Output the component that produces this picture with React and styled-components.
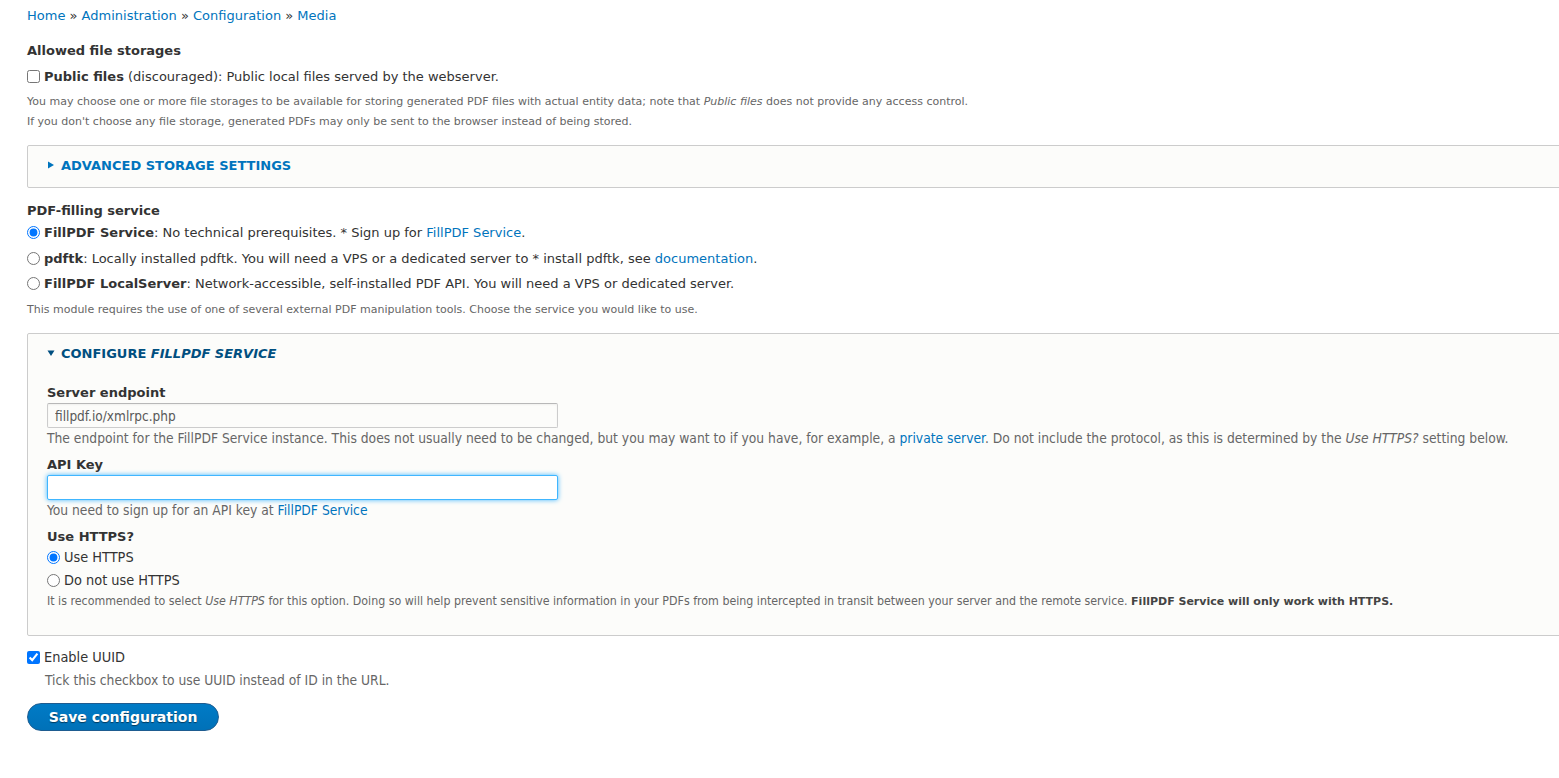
import React from "react";
import styled, { createGlobalStyle } from "styled-components";

const Global = createGlobalStyle`
  html, body { margin: 0; padding: 0; background: #fff; }
  body { font-family: "DejaVu Sans", Verdana, sans-serif; color: #333; overflow: hidden; }
  a { color: #0074bd; text-decoration: none; }
`;

const condensed = `
  font-family: "DejaVu Sans Condensed", "DejaVu Sans", sans-serif;
  font-stretch: condensed;
`;

const Page = styled.div`
  padding: 0 0 40px 27px;
  width: 1559px;
  box-sizing: border-box;
  overflow: hidden;
`;

const Breadcrumb = styled.nav`
  padding-top: 7px;
  font-size: 13px;
  line-height: 18px;
  color: #333;
`;

const Label = styled.div`
  font-weight: bold;
  font-size: 13px;
  line-height: 18px;
  margin-top: ${(p) => p.$mt || 0}px;
`;

const OptionRow = styled.label`
  display: flex;
  align-items: center;
  height: 20px;
  font-size: ${(p) => (p.$condensed ? 14.4 : 13)}px;
  margin-top: ${(p) => p.$mt || 0}px;
  ${(p) => (p.$condensed ? condensed : "")}
  input {
    margin: 0 4px 0 0;
    width: 13px;
    height: 13px;
  }
  b { font-weight: bold; }
`;

const Desc = styled.div`
  font-size: ${(p) => p.$size || 11}px;
  line-height: ${(p) => p.$lh || 20}px;
  color: #666;
  margin-top: ${(p) => p.$mt || 0}px;
  padding-left: ${(p) => p.$pl || 0}px;
  ${(p) => (p.$condensed ? condensed : "")}
  b { color: #444; font-family: "DejaVu Sans", sans-serif; font-stretch: normal; font-size: 11px; }
`;

const Details = styled.div`
  margin-top: 13px;
  margin-right: -30px;
  border: 1px solid #ccc;
  border-radius: 2px;
  background: #fcfcfa;
  padding: 9px 19px 12px;
`;

const Summary = styled.div`
  display: flex;
  align-items: center;
  gap: 6px;
  height: 20px;
  font-size: 13px;
  font-weight: bold;
  text-transform: uppercase;
  color: ${(p) => (p.$open ? "#004f80" : "#0074bd")};
  i { font-style: italic; }
`;

const Arrow = styled.svg`
  width: 8px;
  height: 8px;
  flex: none;
  fill: currentColor;
`;

const Fieldset = styled.div`
  margin-top: 13px;
  margin-right: -30px;
  border: 1px solid #ccc;
  border-radius: 2px;
  background: #fcfcfa;
  padding: 9px 19px 24px;
`;

const FieldLabel = styled.div`
  font-weight: bold;
  font-size: 13px;
  line-height: 18px;
  margin-top: ${(p) => p.$mt || 0}px;
`;

const TextInput = styled.input`
  display: block;
  box-sizing: border-box;
  width: 511px;
  height: 25px;
  margin-top: 1px;
  padding: 2px 7px;
  ${condensed}
  font-size: 13.5px;
  color: #595959;
  background: ${(p) => (p.$focus ? "#fff" : "#fcfcfa")};
  border: 1px solid ${(p) => (p.$focus ? "#40b6ff" : "#ccc")};
  border-top-color: ${(p) => (p.$focus ? "#40b6ff" : "#b8b8b8")};
  border-radius: 2px;
  box-shadow: ${(p) => (p.$focus ? "0 0 5px #40b6ff" : "inset 0 1px 2px rgba(0,0,0,0.05)")};
  outline: none;
`;

const Button = styled.button`
  display: block;
  margin-top: 14px;
  width: 192px;
  height: 28px;
  border-radius: 20em;
  border: 1px solid #1e5c90;
  background: linear-gradient(to bottom, #007bc6, #0071b8);
  color: #fff;
  font-family: "DejaVu Sans", sans-serif;
  font-weight: bold;
  font-size: 14px;
  text-shadow: 0 1px 1px rgba(0,0,0,0.5);
  padding: 0;
  cursor: pointer;
`;

const Radio = (props) => <input type="radio" readOnly {...props} />;

const Right = () => (
  <Arrow viewBox="0 0 8 8"><path d="M1 0.5 L7 4 L1 7.5 Z" /></Arrow>
);
const Down = () => (
  <Arrow viewBox="0 0 8 8"><path d="M0.5 1.5 L7.5 1.5 L4 7 Z" /></Arrow>
);

export default function App() {
  return (
    <>
      <Global />
      <Page>
        <Breadcrumb>
          <a href="#">Home</a> » <a href="#">Administration</a> » <a href="#">Configuration</a> » <a href="#">Media</a>
        </Breadcrumb>

        <Label $mt={17}>Allowed file storages</Label>
        <OptionRow $mt={6}>
          <input type="checkbox" />
          <span><b>Public files</b> (discouraged): Public local files served by the webserver.</span>
        </OptionRow>
        <Desc $mt={6}>
          You may choose one or more file storages to be available for storing generated PDF files with actual entity data; note that <i>Public files</i> does not provide any access control.
          <br />
          If you don't choose any file storage, generated PDFs may only be sent to the browser instead of being stored.
        </Desc>

        <Details>
          <Summary>
            <Right />
            <span>Advanced storage settings</span>
          </Summary>
        </Details>

        <Label $mt={14}>PDF-filling service</Label>
        <OptionRow $mt={2}>
          <Radio name="svc" defaultChecked />
          <span><b>FillPDF Service</b>: No technical prerequisites. * Sign up for <a href="#">FillPDF Service</a>.</span>
        </OptionRow>
        <OptionRow $mt={6}>
          <Radio name="svc" />
          <span><b>pdftk</b>: Locally installed pdftk. You will need a VPS or a dedicated server to * install pdftk, see <a href="#">documentation</a>.</span>
        </OptionRow>
        <OptionRow $mt={5}>
          <Radio name="svc" />
          <span><b>FillPDF LocalServer</b>: Network-accessible, self-installed PDF API. You will need a VPS or dedicated server.</span>
        </OptionRow>
        <Desc $mt={7}>This module requires the use of one of several external PDF manipulation tools. Choose the service you would like to use.</Desc>

        <Fieldset>
          <Summary $open>
            <Down />
            <span>Configure <i>FillPDF Service</i></span>
          </Summary>

          <FieldLabel $mt={21}>Server endpoint</FieldLabel>
          <TextInput defaultValue="fillpdf.io/xmlrpc.php" />
          <Desc $size={13.72} $lh={18} $mt={1} $condensed>
            The endpoint for the FillPDF Service instance. This does not usually need to be changed, but you may want to if you have, for example, a <a href="#">private server</a>. Do not include the protocol, as this is determined by the <i>Use HTTPS?</i> setting below.
          </Desc>

          <FieldLabel $mt={9}>API Key</FieldLabel>
          <TextInput $focus />
          <Desc $size={13.72} $lh={18} $mt={1} $condensed>
            You need to sign up for an API key at <a href="#">FillPDF Service</a>
          </Desc>

          <FieldLabel $mt={9}>Use HTTPS?</FieldLabel>
          <OptionRow $mt={1} $condensed>
            <Radio name="https" defaultChecked />
            <span>Use HTTPS</span>
          </OptionRow>
          <OptionRow $mt={3} $condensed>
            <Radio name="https" />
            <span>Do not use HTTPS</span>
          </OptionRow>
          <Desc $size={12.3} $lh={18} $mt={2} $condensed>
            It is recommended to select <i>Use HTTPS</i> for this option. Doing so will help prevent sensitive information in your PDFs from being intercepted in transit between your server and the remote service. <b>FillPDF Service will only work with HTTPS.</b>
          </Desc>
        </Fieldset>

        <OptionRow $mt={11} $condensed>
          <input type="checkbox" defaultChecked />
          <span>Enable UUID</span>
        </OptionRow>
        <Desc $size={13.72} $lh={18} $mt={4} $pl={18} $condensed>
          Tick this checkbox to use UUID instead of ID in the URL.
        </Desc>

        <Button>Save configuration</Button>
      </Page>
    </>
  );
}
